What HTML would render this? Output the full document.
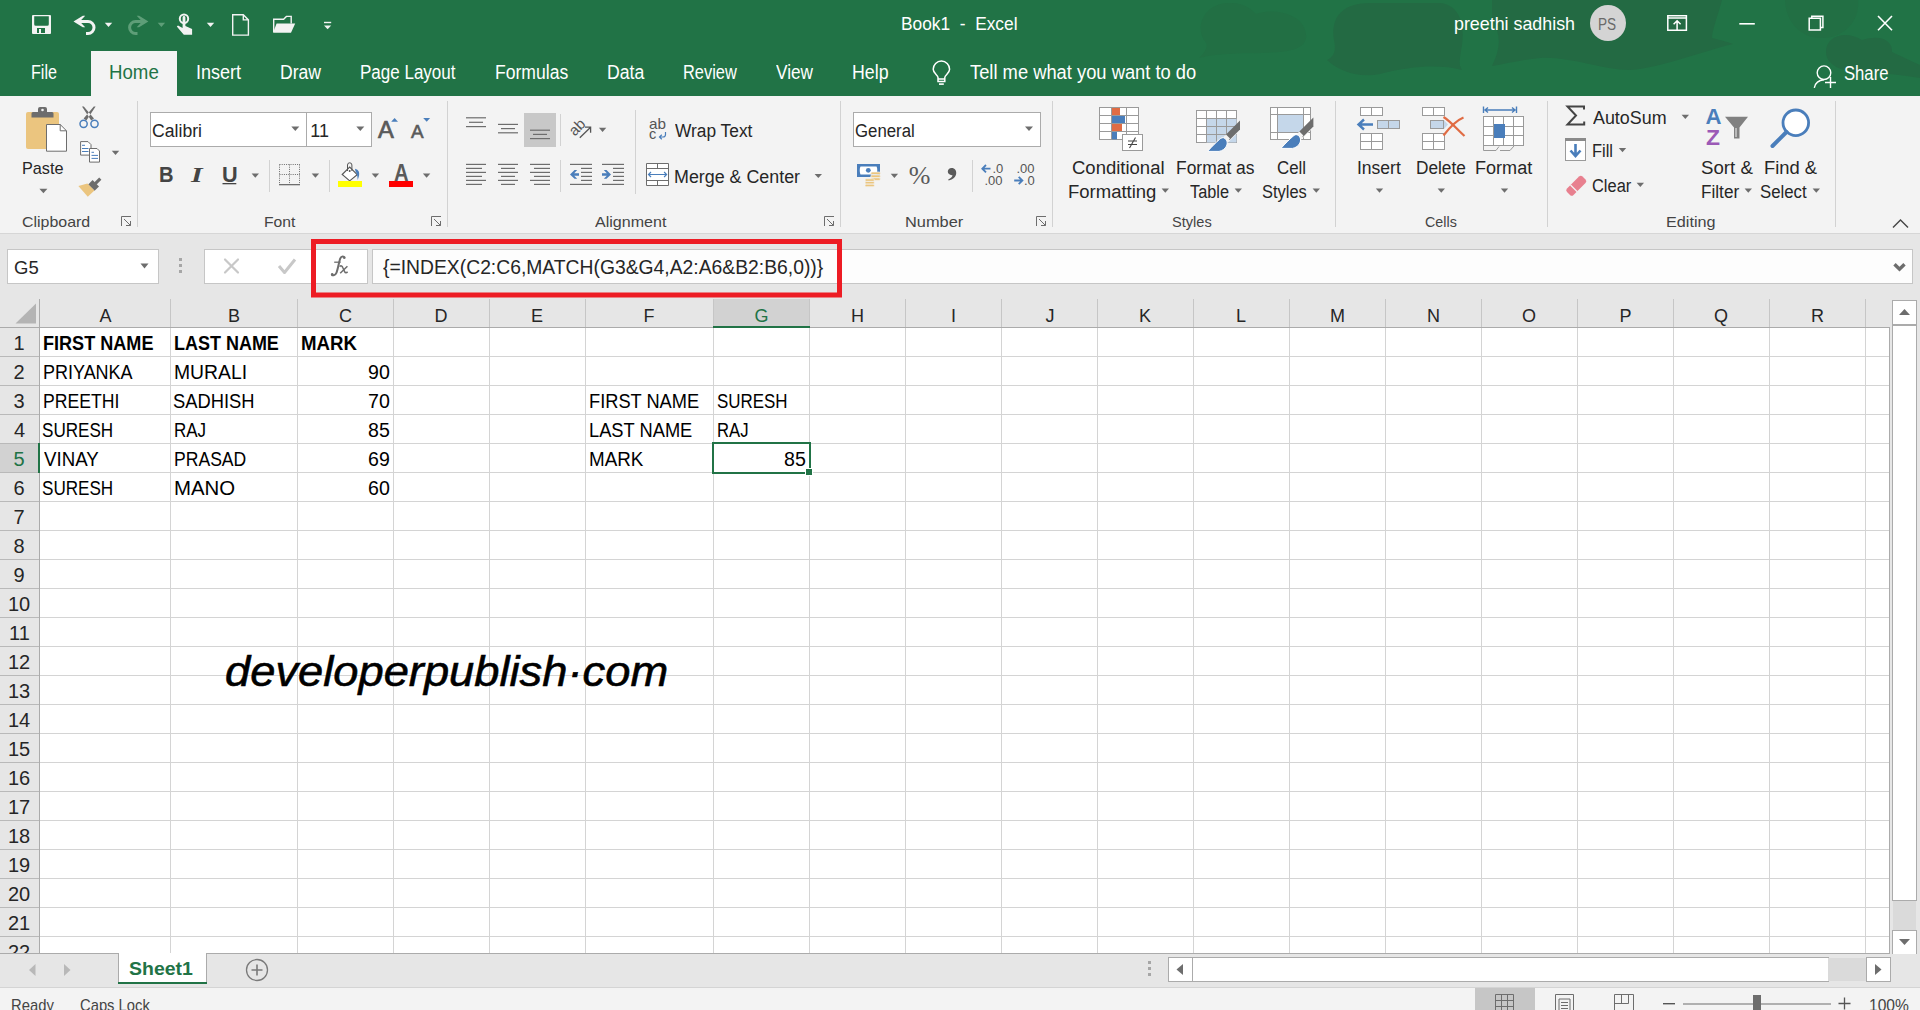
<!DOCTYPE html>
<html><head><meta charset="utf-8"><title>Book1 - Excel</title>
<style>
html,body{margin:0;padding:0;}
body{width:1920px;height:1010px;overflow:hidden;position:relative;background:#f3f3f3;font-family:"Liberation Sans",sans-serif;}
svg{position:absolute;left:0;top:0;}
.tx span{position:absolute;white-space:pre;transform-origin:0 0;}
</style></head><body>
<svg width="1920" height="1010" viewBox="0 0 1920 1010" shape-rendering="auto">
<rect x="0" y="0" width="1920" height="96" fill="#217346" />
<path d="M1199 58 C1205 52 1210 46 1204 40 C1195 25 1205 4 1228 3 C1245 2 1252 10 1256 14 C1270 8 1300 12 1305 30 C1310 45 1298 50 1280 52 C1250 54 1220 52 1199 58Z" fill="#226f44"/>
<path d="M1327 60 C1335 56 1336 50 1334 40 C1330 15 1345 3 1370 3 L1440 3 C1460 5 1465 25 1462 45 C1460 58 1458 64 1462 70 C1440 64 1410 66 1380 74 C1360 78 1340 72 1327 60Z" fill="#236a43"/>
<path d="M1492 0 H1722 C1718 15 1712 30 1712 38 C1720 40 1728 42 1733 44 C1700 52 1660 68 1630 70 C1600 70 1570 56 1540 58 C1520 60 1505 64 1492 66 C1500 50 1502 35 1492 20Z" fill="#236a43"/>
<path d="M1826 52 C1826 36 1845 30 1862 40 C1880 34 1893 40 1892 52 C1905 58 1915 63 1920 65 V78 C1900 75 1880 72 1860 72 C1840 72 1826 64 1826 52Z" fill="#236a43"/>
<path d="M1785 0 H1858 C1860 20 1845 38 1822 38 C1800 38 1786 22 1785 0Z" fill="#226f44"/>
<rect x="91" y="51" width="86" height="45" fill="#f3f3f3" />
<rect x="0" y="96" width="1920" height="137" fill="#f3f3f3" />
<rect x="0" y="233" width="1920" height="1" fill="#d6d6d6"/>
<rect x="0" y="234" width="1920" height="65" fill="#e6e6e6" />
<rect x="0" y="299" width="1920" height="29" fill="#e6e6e6" />
<rect x="0" y="328" width="40" height="625" fill="#e6e6e6" />
<rect x="40" y="328" width="1850" height="625" fill="#ffffff" />
<rect x="7.5" y="249.5" width="151" height="34" fill="#ffffff" stroke="#c6c6c6" stroke-width="1"/>
<path d="M140.5 263.5H148.5L144.5 268.5Z" fill="#6d6d6d"/>
<rect x="179" y="258" width="3" height="3" fill="#a6a6a6" />
<rect x="179" y="264" width="3" height="3" fill="#a6a6a6" />
<rect x="179" y="270" width="3" height="3" fill="#a6a6a6" />
<rect x="204.5" y="249.5" width="163" height="34" fill="#ffffff" stroke="#c6c6c6" stroke-width="1"/>
<rect x="372.5" y="249.5" width="1540" height="34" fill="#fdfdfd" stroke="#c6c6c6" stroke-width="1"/>
<path d="M225 259.5 L238 272.5 M238 259.5 L225 272.5" stroke="#c8c8c8" stroke-width="2.2" stroke-linecap="round"/>
<path d="M279 266 L284.5 272.5 L295 259.5" stroke="#c8c8c8" stroke-width="3" fill="none" stroke-linejoin="round"/>
<path d="M1894.5 264.2 L1899.5 269.2 L1904.5 264.2" stroke="#6d6d6d" stroke-width="3.4" fill="none"/>
<rect x="714" y="299" width="95" height="28" fill="#d2d2d2" />
<rect x="170" y="299" width="1" height="28" fill="#c6c6c6"/>
<rect x="170" y="328" width="1" height="625" fill="#d4d4d4"/>
<rect x="297" y="299" width="1" height="28" fill="#c6c6c6"/>
<rect x="297" y="328" width="1" height="625" fill="#d4d4d4"/>
<rect x="393" y="299" width="1" height="28" fill="#c6c6c6"/>
<rect x="393" y="328" width="1" height="625" fill="#d4d4d4"/>
<rect x="489" y="299" width="1" height="28" fill="#c6c6c6"/>
<rect x="489" y="328" width="1" height="625" fill="#d4d4d4"/>
<rect x="585" y="299" width="1" height="28" fill="#c6c6c6"/>
<rect x="585" y="328" width="1" height="625" fill="#d4d4d4"/>
<rect x="713" y="299" width="1" height="28" fill="#c6c6c6"/>
<rect x="713" y="328" width="1" height="625" fill="#d4d4d4"/>
<rect x="809" y="299" width="1" height="28" fill="#c6c6c6"/>
<rect x="809" y="328" width="1" height="625" fill="#d4d4d4"/>
<rect x="905" y="299" width="1" height="28" fill="#c6c6c6"/>
<rect x="905" y="328" width="1" height="625" fill="#d4d4d4"/>
<rect x="1001" y="299" width="1" height="28" fill="#c6c6c6"/>
<rect x="1001" y="328" width="1" height="625" fill="#d4d4d4"/>
<rect x="1097" y="299" width="1" height="28" fill="#c6c6c6"/>
<rect x="1097" y="328" width="1" height="625" fill="#d4d4d4"/>
<rect x="1193" y="299" width="1" height="28" fill="#c6c6c6"/>
<rect x="1193" y="328" width="1" height="625" fill="#d4d4d4"/>
<rect x="1289" y="299" width="1" height="28" fill="#c6c6c6"/>
<rect x="1289" y="328" width="1" height="625" fill="#d4d4d4"/>
<rect x="1385" y="299" width="1" height="28" fill="#c6c6c6"/>
<rect x="1385" y="328" width="1" height="625" fill="#d4d4d4"/>
<rect x="1481" y="299" width="1" height="28" fill="#c6c6c6"/>
<rect x="1481" y="328" width="1" height="625" fill="#d4d4d4"/>
<rect x="1577" y="299" width="1" height="28" fill="#c6c6c6"/>
<rect x="1577" y="328" width="1" height="625" fill="#d4d4d4"/>
<rect x="1673" y="299" width="1" height="28" fill="#c6c6c6"/>
<rect x="1673" y="328" width="1" height="625" fill="#d4d4d4"/>
<rect x="1769" y="299" width="1" height="28" fill="#c6c6c6"/>
<rect x="1769" y="328" width="1" height="625" fill="#d4d4d4"/>
<rect x="1865" y="299" width="1" height="28" fill="#c6c6c6"/>
<rect x="1865" y="328" width="1" height="625" fill="#d4d4d4"/>
<rect x="0" y="327" width="1890" height="1" fill="#ababab"/>
<rect x="713" y="326" width="97" height="2" fill="#217346" />
<path d="M15.5 323.5 L36 303.5 L36 323.5 Z" fill="#b4b4b4"/>
<rect x="39" y="299" width="1" height="654" fill="#ababab"/>
<rect x="0" y="356" width="39" height="1" fill="#b9b9b9"/>
<rect x="40" y="356" width="1849" height="1" fill="#d4d4d4"/>
<rect x="0" y="385" width="39" height="1" fill="#b9b9b9"/>
<rect x="40" y="385" width="1849" height="1" fill="#d4d4d4"/>
<rect x="0" y="414" width="39" height="1" fill="#b9b9b9"/>
<rect x="40" y="414" width="1849" height="1" fill="#d4d4d4"/>
<rect x="0" y="443" width="39" height="1" fill="#b9b9b9"/>
<rect x="40" y="443" width="1849" height="1" fill="#d4d4d4"/>
<rect x="0" y="472" width="39" height="1" fill="#b9b9b9"/>
<rect x="40" y="472" width="1849" height="1" fill="#d4d4d4"/>
<rect x="0" y="501" width="39" height="1" fill="#b9b9b9"/>
<rect x="40" y="501" width="1849" height="1" fill="#d4d4d4"/>
<rect x="0" y="530" width="39" height="1" fill="#b9b9b9"/>
<rect x="40" y="530" width="1849" height="1" fill="#d4d4d4"/>
<rect x="0" y="559" width="39" height="1" fill="#b9b9b9"/>
<rect x="40" y="559" width="1849" height="1" fill="#d4d4d4"/>
<rect x="0" y="588" width="39" height="1" fill="#b9b9b9"/>
<rect x="40" y="588" width="1849" height="1" fill="#d4d4d4"/>
<rect x="0" y="617" width="39" height="1" fill="#b9b9b9"/>
<rect x="40" y="617" width="1849" height="1" fill="#d4d4d4"/>
<rect x="0" y="646" width="39" height="1" fill="#b9b9b9"/>
<rect x="40" y="646" width="1849" height="1" fill="#d4d4d4"/>
<rect x="0" y="675" width="39" height="1" fill="#b9b9b9"/>
<rect x="40" y="675" width="1849" height="1" fill="#d4d4d4"/>
<rect x="0" y="704" width="39" height="1" fill="#b9b9b9"/>
<rect x="40" y="704" width="1849" height="1" fill="#d4d4d4"/>
<rect x="0" y="733" width="39" height="1" fill="#b9b9b9"/>
<rect x="40" y="733" width="1849" height="1" fill="#d4d4d4"/>
<rect x="0" y="762" width="39" height="1" fill="#b9b9b9"/>
<rect x="40" y="762" width="1849" height="1" fill="#d4d4d4"/>
<rect x="0" y="791" width="39" height="1" fill="#b9b9b9"/>
<rect x="40" y="791" width="1849" height="1" fill="#d4d4d4"/>
<rect x="0" y="820" width="39" height="1" fill="#b9b9b9"/>
<rect x="40" y="820" width="1849" height="1" fill="#d4d4d4"/>
<rect x="0" y="849" width="39" height="1" fill="#b9b9b9"/>
<rect x="40" y="849" width="1849" height="1" fill="#d4d4d4"/>
<rect x="0" y="878" width="39" height="1" fill="#b9b9b9"/>
<rect x="40" y="878" width="1849" height="1" fill="#d4d4d4"/>
<rect x="0" y="907" width="39" height="1" fill="#b9b9b9"/>
<rect x="40" y="907" width="1849" height="1" fill="#d4d4d4"/>
<rect x="0" y="936" width="39" height="1" fill="#b9b9b9"/>
<rect x="40" y="936" width="1849" height="1" fill="#d4d4d4"/>
<rect x="0" y="444" width="39" height="28" fill="#d2d2d2" />
<rect x="38" y="443" width="2" height="30" fill="#217346" />
<rect x="1889" y="327" width="1" height="627" fill="#ababab"/>
<rect x="0" y="953" width="1890" height="1" fill="#ababab"/>
<rect x="1890" y="299" width="30" height="655" fill="#e6e6e6" />
<rect x="1892.5" y="300.5" width="24" height="24" fill="#ffffff" stroke="#ababab" stroke-width="1"/>
<path d="M1899.0 315.0H1910.0L1904.5 309.0Z" fill="#6d6d6d"/>
<rect x="1892.5" y="325.5" width="24" height="575" fill="#ffffff" stroke="#ababab" stroke-width="1"/>
<rect x="1893" y="901" width="23" height="29" fill="#dadada" />
<rect x="1892.5" y="930.5" width="24" height="24" fill="#ffffff" stroke="#ababab" stroke-width="1"/>
<path d="M1899.0 939.0H1910.0L1904.5 945.0Z" fill="#6d6d6d"/>
<rect x="0" y="954" width="1920" height="33" fill="#e6e6e6" />
<rect x="0" y="987" width="1920" height="1" fill="#d4d4d4"/>
<path d="M35.5 964 L29 970 L35.5 976 Z" fill="#b8b8b8"/>
<path d="M64 964 L70.5 970 L64 976 Z" fill="#b8b8b8"/>
<rect x="118" y="953" width="89" height="30" fill="#ffffff" />
<rect x="118" y="953" width="1" height="30" fill="#ababab"/>
<rect x="206" y="953" width="1" height="30" fill="#ababab"/>
<rect x="118" y="982" width="89" height="2" fill="#217346" />
<circle cx="257" cy="970" r="10.5" fill="none" stroke="#7a7a7a" stroke-width="1.3"/>
<path d="M251.5 970 H262.5 M257 964.5 V975.5" stroke="#7a7a7a" stroke-width="1.6"/>
<rect x="1148" y="961" width="3" height="3" fill="#a6a6a6" />
<rect x="1148" y="967" width="3" height="3" fill="#a6a6a6" />
<rect x="1148" y="973" width="3" height="3" fill="#a6a6a6" />
<rect x="1168.5" y="957.5" width="24" height="24" fill="#ffffff" stroke="#ababab" stroke-width="1"/>
<path d="M1176.5 969.5 L1183 964 L1183 975 Z" fill="#6d6d6d"/>
<rect x="1192.5" y="957.5" width="636" height="24" fill="#ffffff" stroke="#ababab" stroke-width="1"/>
<rect x="1828" y="958" width="38" height="23" fill="#dadada" />
<rect x="1866.5" y="957.5" width="24" height="24" fill="#ffffff" stroke="#ababab" stroke-width="1"/>
<path d="M1875 964 L1881.5 969.5 L1875 975 Z" fill="#6d6d6d"/>
<rect x="0" y="988" width="1920" height="22" fill="#f3f3f3" />
<rect x="1475" y="988" width="60" height="22" fill="#c6c6c6" />
<path d="M1495.5 994.5 H1513.5 V1010 M1495.5 994.5 V1010 M1495.5 1000.5 H1513.5 M1495.5 1006.5 H1513.5 M1501.5 994.5 V1010 M1507.5 994.5 V1010" stroke="#6d6d6d" stroke-width="1" fill="none"/>
<path d="M1555.5 994.5 H1573.5 V1010 M1555.5 994.5 V1010 M1559 999 H1570 V1010 M1559 999 V1010 M1561 1002.5 H1568 M1561 1005.5 H1568 M1561 1008.5 H1568" stroke="#6d6d6d" stroke-width="1" fill="none"/>
<path d="M1614.5 994.5 H1633.5 V1010 M1614.5 994.5 V1010 M1614.5 1003.5 H1628.5 V994.5 M1621.5 994.5 V1003.5" stroke="#6d6d6d" stroke-width="1" fill="none"/>
<rect x="1663" y="1003" width="12" height="1.4" fill="#555555"/>
<rect x="1683" y="1003" width="148" height="2" fill="#b0b0b0"/>
<rect x="1753" y="995" width="8" height="15" fill="#6d6d6d" />
<path d="M1838.5 1003.5 H1850.5 M1844.5 997.5 V1009.5" stroke="#555" stroke-width="1.3"/>
<path d="M32 16a1 1 0 0 1 1-1H50a1 1 0 0 1 1 1V33a1 1 0 0 1-1 1H33a1 1 0 0 1-1-1Z" fill="#f3f3f3"/>
<path d="M34.2 16.2H48.8V24.2a1.5 1.5 0 0 1-1.5 1.5H35.7a1.5 1.5 0 0 1-1.5-1.5Z" fill="#217346"/>
<rect x="37" y="28" width="8" height="5" fill="#217346"/><rect x="39" y="29" width="2" height="4" fill="#f3f3f3"/>
<path d="M79 21.5H88A6 6 0 0 1 88 33.5H86" stroke="#f3f3f3" stroke-width="3" fill="none"/>
<path d="M73.5 21.5L82.8 15.8H85.2L79.8 21.5L85.2 27.2H82.8Z" fill="#f3f3f3"/>
<path d="M104.8 22.799999999999997H112.2L108.5 27.0Z" fill="#f3f3f3"/>
<path d="M143 21.5H135.6A6 6 0 0 0 135.6 33.5H137.5" stroke="#5e9e78" stroke-width="3" fill="none"/>
<path d="M148.4 21.5L139.1 15.8H136.7L142.1 21.5L136.7 27.2H139.1Z" fill="#5e9e78"/>
<path d="M157.70000000000002 22.799999999999997H165.1L161.4 27.0Z" fill="#5e9e78"/>
<circle cx="184" cy="18.8" r="4.2" fill="none" stroke="#f3f3f3" stroke-width="2"/>
<path d="M182.6 17.5a1.4 1.4 0 0 1 2.8 0V26L192.1 29V34.8H183.8L176.8 26.5L178 25.6L182.6 28Z" fill="#f3f3f3"/>
<path d="M206.8 22.799999999999997H214.2L210.5 27.0Z" fill="#f3f3f3"/>
<path d="M232.7 14.8H243.3L248.4 19.9V35.1H232.7Z M243.3 14.8V19.9H248.4" stroke="#f3f3f3" stroke-width="1.4" fill="none"/>
<path d="M273.7 32V19.2H283.6L286.4 16.4H291.2V23.5" stroke="#f3f3f3" stroke-width="1.4" fill="none"/>
<path d="M273 32.8L276.6 23.6H295.2L291 32.8Z" fill="#f3f3f3"/>
<rect x="324" y="21.8" width="7.2" height="1.4" fill="#f3f3f3"/>
<path d="M324.0 25.599999999999998H331.20000000000005L327.6 29.2Z" fill="#f3f3f3"/>
<path d="M1667.8 15.8H1686.4V30.3H1667.8Z M1667.8 18H1686.4" stroke="#fff" stroke-width="1.5" fill="none"/>
<path d="M1677.1 30.3V20.8 M1673.6 24.3L1677.1 20.8L1680.6 24.3" stroke="#fff" stroke-width="1.5" fill="none"/>
<rect x="1739.3" y="23" width="15.5" height="1.6" fill="#fff"/>
<path d="M1809.2 18.2H1820.4V29.9H1809.2Z M1811.8 18.2V16.3H1822.9V27.4H1820.4" stroke="#fff" stroke-width="1.5" fill="none"/>
<path d="M1878 16L1892 30.2M1892 16L1878 30.2" stroke="#fff" stroke-width="1.6"/>
<path d="M938 81.5V77.5C938 75 933.2 73.5 933.2 69.3A8.2 8.2 0 0 1 949.6 69.3C949.6 73.5 944.8 75 944.8 77.5V81.5Z M938 79H944.8" stroke="#fff" stroke-width="1.5" fill="none"/>
<rect x="939" y="83.3" width="4.8" height="1.6" fill="#fff"/>
<circle cx="1824" cy="72.7" r="6.8" fill="none" stroke="#fff" stroke-width="1.4"/>
<path d="M1814.3 87.8C1815.3 83 1818.6 80.2 1824 79.8" stroke="#fff" stroke-width="1.4" fill="none"/>
<path d="M1825 82.5H1836M1830.5 77V88" stroke="#fff" stroke-width="1.4"/>
<rect x="137" y="101" width="1" height="126" fill="#d2d2d2"/>
<rect x="447" y="101" width="1" height="126" fill="#d2d2d2"/>
<rect x="840" y="101" width="1" height="126" fill="#d2d2d2"/>
<rect x="1052" y="101" width="1" height="126" fill="#d2d2d2"/>
<rect x="1335" y="101" width="1" height="126" fill="#d2d2d2"/>
<rect x="1547" y="101" width="1" height="126" fill="#d2d2d2"/>
<rect x="1835" y="101" width="1" height="126" fill="#d2d2d2"/>
<rect x="269" y="160" width="1" height="32" fill="#d2d2d2"/>
<rect x="329" y="160" width="1" height="32" fill="#d2d2d2"/>
<rect x="560" y="114" width="1" height="32" fill="#d2d2d2"/>
<rect x="560" y="160" width="1" height="32" fill="#d2d2d2"/>
<rect x="635" y="110" width="1" height="84" fill="#d2d2d2"/>
<rect x="972" y="160" width="1" height="32" fill="#d2d2d2"/>
<path d="M121.5 226V216.5H131 M124 219L130.5 225.5 M130.5 221V225.5H126" stroke="#6d6d6d" stroke-width="1" fill="none"/>
<path d="M431.5 226V216.5H441 M434 219L440.5 225.5 M440.5 221V225.5H436" stroke="#6d6d6d" stroke-width="1" fill="none"/>
<path d="M824.5 226V216.5H834 M827 219L833.5 225.5 M833.5 221V225.5H829" stroke="#6d6d6d" stroke-width="1" fill="none"/>
<path d="M1036.5 226V216.5H1046 M1039 219L1045.5 225.5 M1045.5 221V225.5H1041" stroke="#6d6d6d" stroke-width="1" fill="none"/>
<path d="M1893 227.5L1900.5 220L1908 227.5" stroke="#444" stroke-width="1.4" fill="none"/>
<rect x="26" y="112" width="33" height="37" rx="2" fill="#ebc57f"/>
<path d="M38 109a2 2 0 0 1 2-2h5a2 2 0 0 1 2 2V112H52a1.5 1.5 0 0 1 1.5 1.5V117.5H31.5V113.5A1.5 1.5 0 0 1 33 112H38Z" fill="#6d6d6d"/>
<circle cx="42.5" cy="110" r="1.3" fill="#f3f3f3"/>
<path d="M46.5 124.5H60.2L66.5 130.8V151.2H46.5Z" fill="#fff" stroke="#6d6d6d" stroke-width="1"/>
<path d="M60.2 124.5V130.8H66.5" fill="none" stroke="#6d6d6d" stroke-width="1"/>
<path d="M39.4 188.75H47.4L43.4 193.25Z" fill="#6d6d6d"/>
<path d="M82 106.4H83.8L94 118.4L91.2 120.6Z M95.6 106.4H93.8L83.6 118.4L86.4 120.6Z" fill="#6d6d6d"/>
<circle cx="83.6" cy="123.8" r="3.6" fill="none" stroke="#4a7ebb" stroke-width="1.5"/><circle cx="94.5" cy="123.8" r="3.6" fill="none" stroke="#4a7ebb" stroke-width="1.5"/>
<path d="M80.6 141.6H88L91 144.6V155.1H80.6Z" fill="#fff" stroke="#6d6d6d" stroke-width="1"/>
<path d="M89.5 148.5H97L99.5 151V162.1H89.5Z" fill="#fff" stroke="#6d6d6d" stroke-width="1"/>
<path d="M82 145.3H85M82 148.5H88.5M82 151.5H88.5M91.5 152.3H94M91.5 155.4H98M91.5 158.4H98" stroke="#4a7ebb" stroke-width="1"/>
<path d="M111.8 150.70000000000002H119.2L115.5 154.9Z" fill="#6d6d6d"/>
<path d="M99.2 177.6L101.4 179.8L96.4 184.8L94.2 182.6Z" fill="#6d6d6d"/>
<path d="M92.6 180L99 186.4L94.6 190.8L88.2 184.4Z" fill="#6d6d6d"/>
<path d="M78.4 186.1L87.4 183.6L94.4 190.6L87.8 196.8Z" fill="#ebc57f"/>
<rect x="150.5" y="112.5" width="156" height="34" fill="#fff" stroke="#ababab" stroke-width="1"/>
<rect x="306.5" y="112.5" width="65" height="34" fill="#fff" stroke="#ababab" stroke-width="1"/>
<path d="M291.3 126.55000000000001H299.3L295.3 131.05Z" fill="#6d6d6d"/>
<path d="M356.3 126.55000000000001H364.3L360.3 131.05Z" fill="#6d6d6d"/>
<path d="M391.2 121.8H398L394.6 118Z" fill="#4a7ebb"/>
<path d="M423.2 118H430.1L426.7 121.8Z" fill="#4a7ebb"/>
<path d="M279.5 164.5H300M279.5 174.5H300M279.5 164.5V184M289.5 164.5V184M299.5 164.5V184" stroke="#6d6d6d" stroke-width="1" stroke-dasharray="1 1.2" fill="none"/>
<rect x="279" y="184" width="21" height="1.3" fill="#6d6d6d"/>
<path d="M251.60000000000002 173.5H259.0L255.3 177.7Z" fill="#6d6d6d"/>
<path d="M311.7 173.5H319.09999999999997L315.4 177.7Z" fill="#6d6d6d"/>
<path d="M371.7 173.5H379.09999999999997L375.4 177.7Z" fill="#6d6d6d"/>
<path d="M422.90000000000003 173.5H430.3L426.6 177.7Z" fill="#6d6d6d"/>
<rect x="222.5" y="183" width="13.8" height="1.3" fill="#444"/>
<path d="M342.2 174.5L349.7 167.1L357.2 174.6L349.7 180.9Z" fill="#fff" stroke="#555" stroke-width="1.1"/>
<path d="M347.5 171V165a2.2 2.2 0 0 1 4.4 0V171" fill="none" stroke="#555" stroke-width="1"/><circle cx="349.7" cy="171" r="1" fill="#555"/>
<path d="M355 168.8C358.5 169.5 361 172.5 357.7 180C357.5 176 357 173 355.5 171.5Z" fill="#4a7ebb"/>
<rect x="338" y="181" width="24" height="6" fill="#ffff00"/>
<rect x="389" y="181" width="24" height="6" fill="#ff0000"/>
<rect x="524" y="113" width="32" height="34" fill="#c8c8c8" />
<rect x="466.0" y="117.2" width="20" height="1.2" fill="#6d6d6d"/>
<rect x="469.0" y="121.7" width="14" height="1.2" fill="#6d6d6d"/>
<rect x="466.0" y="126" width="20" height="1.2" fill="#6d6d6d"/>
<rect x="498.0" y="123.8" width="20" height="1.2" fill="#6d6d6d"/>
<rect x="501.0" y="128" width="14" height="1.2" fill="#6d6d6d"/>
<rect x="498.0" y="132.2" width="20" height="1.2" fill="#6d6d6d"/>
<rect x="530.0" y="129.6" width="20" height="1.2" fill="#6d6d6d"/>
<rect x="533.0" y="133.8" width="14" height="1.2" fill="#6d6d6d"/>
<rect x="530.0" y="138" width="20" height="1.2" fill="#6d6d6d"/>
<rect x="466" y="163.8" width="20" height="1.2" fill="#6d6d6d"/>
<rect x="466" y="167.8" width="16" height="1.2" fill="#6d6d6d"/>
<rect x="466" y="171.8" width="20" height="1.2" fill="#6d6d6d"/>
<rect x="466" y="175.8" width="16" height="1.2" fill="#6d6d6d"/>
<rect x="466" y="179.8" width="20" height="1.2" fill="#6d6d6d"/>
<rect x="466" y="183.8" width="16" height="1.2" fill="#6d6d6d"/>
<rect x="498.0" y="163.8" width="20" height="1.2" fill="#6d6d6d"/>
<rect x="501.0" y="167.8" width="14" height="1.2" fill="#6d6d6d"/>
<rect x="498.0" y="171.8" width="20" height="1.2" fill="#6d6d6d"/>
<rect x="501.0" y="175.8" width="14" height="1.2" fill="#6d6d6d"/>
<rect x="498.0" y="179.8" width="20" height="1.2" fill="#6d6d6d"/>
<rect x="501.0" y="183.8" width="14" height="1.2" fill="#6d6d6d"/>
<rect x="530" y="163.8" width="20" height="1.2" fill="#6d6d6d"/>
<rect x="534" y="167.8" width="16" height="1.2" fill="#6d6d6d"/>
<rect x="530" y="171.8" width="20" height="1.2" fill="#6d6d6d"/>
<rect x="534" y="175.8" width="16" height="1.2" fill="#6d6d6d"/>
<rect x="530" y="179.8" width="20" height="1.2" fill="#6d6d6d"/>
<rect x="534" y="183.8" width="16" height="1.2" fill="#6d6d6d"/>
<rect x="570" y="163.8" width="22" height="1.2" fill="#6d6d6d"/>
<rect x="570" y="183.8" width="22" height="1.2" fill="#6d6d6d"/>
<rect x="581" y="167.8" width="11" height="1.2" fill="#6d6d6d"/>
<rect x="581" y="171.8" width="11" height="1.2" fill="#6d6d6d"/>
<rect x="581" y="175.8" width="11" height="1.2" fill="#6d6d6d"/>
<rect x="581" y="179.8" width="11" height="1.2" fill="#6d6d6d"/>
<rect x="602" y="163.8" width="22" height="1.2" fill="#6d6d6d"/>
<rect x="602" y="183.8" width="22" height="1.2" fill="#6d6d6d"/>
<rect x="613" y="167.8" width="11" height="1.2" fill="#6d6d6d"/>
<rect x="613" y="171.8" width="11" height="1.2" fill="#6d6d6d"/>
<rect x="613" y="175.8" width="11" height="1.2" fill="#6d6d6d"/>
<rect x="613" y="179.8" width="11" height="1.2" fill="#6d6d6d"/>
<path d="M570 174.4L574.5 170H577.2L574.2 173.2H579V175.8H574.2L577.2 178.8H574.5Z" fill="#4a7ebb"/>
<path d="M611 174.4L606.5 170H603.8L606.8 173.2H602V175.8H606.8L603.8 178.8H606.5Z" fill="#4a7ebb"/>
<g transform="translate(577.5 127.5) rotate(-45)"><text x="-8.5" y="4.5" font-family="Liberation Sans" font-size="15" fill="#555">ab</text></g>
<path d="M579.8 137.8L590.6 127.2M585 127.2H590.6V132.8" stroke="#555" stroke-width="1.3" fill="none"/>
<path d="M598.9 127.70000000000002H606.3000000000001L602.6 131.9Z" fill="#6d6d6d"/>
<text x="649" y="128.6" font-family="Liberation Sans" font-size="14.5" fill="#555" textLength="17" lengthAdjust="spacingAndGlyphs">ab</text>
<text x="649" y="138.8" font-family="Liberation Sans" font-size="14.5" fill="#555">c</text>
<path d="M665.5 132V134.5A2.5 2.5 0 0 1 663 137H659.5M661.8 134.8L659.5 137L661.8 139.2" stroke="#4a7ebb" stroke-width="1.2" fill="none"/>
<path d="M646.5 163.5H668.5V185.5H646.5Z M646.5 168.5H668.5 M646.5 180.5H668.5 M657.5 163.5V168.5 M657.5 180.5V185.5" stroke="#6d6d6d" stroke-width="1" fill="#fff"/>
<path d="M648.5 174.5H666.6 M651 172L648.5 174.5L651 177 M664.1 172L666.6 174.5L664.1 177" stroke="#4a7ebb" stroke-width="1.2" fill="none"/>
<path d="M814.5999999999999 173.9H822.0L818.3 178.1Z" fill="#6d6d6d"/>
<rect x="853.5" y="112.5" width="187" height="34" fill="#fff" stroke="#ababab" stroke-width="1"/>
<path d="M1025.0 126.55000000000001H1033.0L1029 131.05Z" fill="#6d6d6d"/>
<rect x="857" y="164" width="23" height="13" fill="#4a7ebb"/>
<path d="M860.5 166.5H876.5C877.5 168 877.5 172.5 876.5 174.5H860.5C859.5 172.5 859.5 168 860.5 166.5Z" fill="#fff"/>
<circle cx="868.3" cy="170.3" r="2.4" fill="#4a7ebb"/>
<rect x="870.8" y="172" width="9.6" height="2.6" rx="1.3" fill="#ebc57f" stroke="#f3f3f3" stroke-width="0.7"/>
<rect x="870.8" y="174.9" width="9.6" height="2.6" rx="1.3" fill="#ebc57f" stroke="#f3f3f3" stroke-width="0.7"/>
<rect x="870.8" y="177.8" width="9.6" height="2.6" rx="1.3" fill="#ebc57f" stroke="#f3f3f3" stroke-width="0.7"/>
<rect x="865" y="178.8" width="9.4" height="2.5" rx="1.25" fill="#ebc57f" stroke="#f3f3f3" stroke-width="0.7"/>
<rect x="865" y="181.5" width="9.4" height="2.5" rx="1.25" fill="#ebc57f" stroke="#f3f3f3" stroke-width="0.7"/>
<rect x="865" y="184.2" width="9.4" height="2.5" rx="1.25" fill="#ebc57f" stroke="#f3f3f3" stroke-width="0.7"/>
<path d="M890.6999999999999 173.70000000000002H898.1L894.4 177.9Z" fill="#6d6d6d"/>
<text x="908.8" y="184" font-family="Liberation Serif" font-size="26" fill="#5a5a5a">%</text>
<path d="M951.5 168C955 168 956.5 170.5 956.2 173.5C955.8 177 953 179.5 948.6 180.5L948.2 179.4C951 178.3 952.2 176.8 952.5 175.2C949.8 175.5 947.8 173.8 947.8 171.6C947.8 169.5 949.5 168 951.5 168Z" fill="#5a5a5a"/>
<path d="M982.5 168.7H990.5M986 165L982.3 168.7L986 172.4" stroke="#4a7ebb" stroke-width="1.8" fill="none"/>
<text x="992.5" y="173.1" font-family="Liberation Sans" font-size="13" fill="#555">.0</text>
<text x="984.5" y="185" font-family="Liberation Sans" font-size="13" fill="#555">.00</text>
<text x="1016.5" y="173.1" font-family="Liberation Sans" font-size="13" fill="#555">.00</text>
<path d="M1014.2 180.5H1022.2M1018.7 176.8L1022.4 180.5L1018.7 184.2" stroke="#4a7ebb" stroke-width="1.8" fill="none"/>
<text x="1024" y="185" font-family="Liberation Sans" font-size="13" fill="#555">.0</text>
<rect x="1099.5" y="107.5" width="39" height="32" fill="#fff" stroke="#9a9a9a" stroke-width="1"/>
<rect x="1112" y="108" width="8" height="7.3" fill="#e06c44"/><rect x="1112" y="116" width="13" height="7.3" fill="#4a7ebb"/><rect x="1112" y="124" width="10" height="7.3" fill="#e06c44"/><rect x="1112" y="132" width="5" height="7.3" fill="#4a7ebb"/>
<path d="M1099.5 115.5H1138.5M1099.5 123.5H1138.5M1099.5 131.5H1138.5M1111.5 107.5V139.5M1126.5 107.5V139.5" stroke="#9a9a9a" stroke-width="1" fill="none"/>
<rect x="1122.5" y="134.5" width="20" height="16" fill="#fff" stroke="#9a9a9a" stroke-width="1"/>
<path d="M1128 141H1137M1128 144.5H1137M1129.5 148L1135.5 137.5" stroke="#444" stroke-width="1.1"/>
<rect x="1196.5" y="110.5" width="40" height="32" fill="#fff" stroke="#9a9a9a" stroke-width="1"/>
<rect x="1206.5" y="118.5" width="30" height="24" fill="#c5d7ea"/>
<path d="M1196.5 118.5H1236.5M1196.5 126.5H1236.5M1196.5 134.5H1236.5M1206.5 110.5V142.5M1216.5 110.5V142.5M1226.5 110.5V142.5" stroke="#9a9a9a" stroke-width="1" fill="none"/>
<path d="M1240 120.4V130.4L1228 142.4L1224 138.4L1236 126.4Z" fill="#f3f3f3"/>
<path d="M1240 120.4L1240 129.4L1229.5 139.9L1225 135.4Z" fill="#6d6d6d"/>
<path d="M1230 138.4L1227.5 140.9L1223.5 136.9L1226 134.4Z" fill="#f3f3f3"/>
<path d="M1225 138.4C1230 142.4 1226 150.4 1219 151.4 H1207.5 C1212 146.4 1216 142.4 1219.5 139.4C1221 137.9 1223 136.9 1225 138.4Z" fill="#4a7ebb" stroke="#fff" stroke-width="1"/>
<rect x="1270.5" y="107.5" width="40" height="32" fill="#fff" stroke="#9a9a9a" stroke-width="1"/>
<rect x="1277.5" y="114.5" width="26" height="18" fill="#c5d7ea"/>
<path d="M1270.5 114.5H1310.5M1270.5 132.5H1310.5M1277.5 107.5V139.5M1303.5 107.5V139.5" stroke="#9a9a9a" stroke-width="1" fill="none"/>
<path d="M1313.4 117.4V127.4L1301.4 139.4L1297.4 135.4L1309.4 123.4Z" fill="#f3f3f3"/>
<path d="M1313.4 117.4L1313.4 126.4L1302.9 136.9L1298.4 132.4Z" fill="#6d6d6d"/>
<path d="M1303.4 135.4L1300.9 137.9L1296.9 133.9L1299.4 131.4Z" fill="#f3f3f3"/>
<path d="M1298.4 135.4C1303.4 139.4 1299.4 147.4 1292.4 148.4 H1280.9 C1285.4 143.4 1289.4 139.4 1292.9 136.4C1294.4 134.9 1296.4 133.9 1298.4 135.4Z" fill="#4a7ebb" stroke="#fff" stroke-width="1"/>
<path d="M1161.6 188.6H1169.0L1165.3 192.79999999999998Z" fill="#6d6d6d"/>
<path d="M1234.6 188.6H1242.0L1238.3 192.79999999999998Z" fill="#6d6d6d"/>
<path d="M1312.6 188.6H1320.0L1316.3 192.79999999999998Z" fill="#6d6d6d"/>
<rect x="1360.5" y="107.5" width="22" height="8" fill="#fff" stroke="#9a9a9a" stroke-width="1"/>
<path d="M1371.5 107V116" stroke="#9a9a9a" stroke-width="1"/>
<rect x="1377.5" y="120.5" width="22" height="8" fill="#c5d7ea" stroke="#9a9a9a" stroke-width="1"/>
<path d="M1388.5 120V129" stroke="#9a9a9a" stroke-width="1"/>
<rect x="1360.5" y="133.5" width="22" height="16" fill="#fff" stroke="#9a9a9a" stroke-width="1"/>
<path d="M1371.5 133V150" stroke="#9a9a9a" stroke-width="1"/>
<path d="M1360 141.5H1383" stroke="#9a9a9a" stroke-width="1"/>
<path d="M1373 124.5H1359M1364 119.5L1358.5 124.5L1364 129.5" stroke="#4a7ebb" stroke-width="2.4" fill="none"/>
<rect x="1422.5" y="107.5" width="22" height="8" fill="#fff" stroke="#9a9a9a" stroke-width="1"/>
<path d="M1433.5 107V116" stroke="#9a9a9a" stroke-width="1"/>
<rect x="1430.5" y="120.5" width="13" height="8" fill="#c5d7ea" stroke="#9a9a9a" stroke-width="1"/>
<path d="M1444 120L1448 124.5L1444 129Z" fill="#c5d7ea"/>
<rect x="1422.5" y="133.5" width="22" height="16" fill="#fff" stroke="#9a9a9a" stroke-width="1"/>
<path d="M1433.5 133V150" stroke="#9a9a9a" stroke-width="1"/>
<path d="M1422 141.5H1445" stroke="#9a9a9a" stroke-width="1"/>
<path d="M1443.5 117C1450 121 1456 128 1464.5 136" stroke="#e06c44" stroke-width="2.2" fill="none"/>
<path d="M1463.5 117.5C1456 120.5 1450 127 1443.5 135.5" stroke="#e06c44" stroke-width="2.2" fill="none"/>
<path d="M1483.5 106.5V113M1516.5 106.5V113M1485 110H1515M1488 107.5L1485 110L1488 112.5M1512 107.5L1515 110L1512 112.5" stroke="#4a7ebb" stroke-width="1.4" fill="none"/>
<rect x="1483.5" y="116.5" width="40" height="29" fill="#fff" stroke="#9a9a9a" stroke-width="1"/>
<path d="M1493.5 116V146" stroke="#9a9a9a" stroke-width="1"/>
<path d="M1503.5 116V146" stroke="#9a9a9a" stroke-width="1"/>
<path d="M1513.5 116V146" stroke="#9a9a9a" stroke-width="1"/>
<path d="M1483 126.5H1524" stroke="#9a9a9a" stroke-width="1"/>
<path d="M1483 135.5H1524" stroke="#9a9a9a" stroke-width="1"/>
<rect x="1494" y="124" width="11" height="14" fill="#4a7ebb"/>
<path d="M1483.5 146V150.5H1496L1499 146.5M1500 150.5H1510L1514 146" stroke="#9a9a9a" stroke-width="1" fill="none"/>
<path d="M1375.8 188.6H1383.2L1379.5 192.79999999999998Z" fill="#6d6d6d"/>
<path d="M1437.6 188.6H1445.0L1441.3 192.79999999999998Z" fill="#6d6d6d"/>
<path d="M1500.8 188.6H1508.2L1504.5 192.79999999999998Z" fill="#6d6d6d"/>
<path d="M1584 109.5V106.5H1567.5L1576 115.5L1567.5 124.5H1584.2V121.5" stroke="#444" stroke-width="2" fill="none" stroke-linejoin="miter"/>
<path d="M1681.6 114.7H1689.0L1685.3 118.89999999999999Z" fill="#6d6d6d"/>
<rect x="1565.5" y="138.5" width="20" height="22" fill="#fff" stroke="#9a9a9a" stroke-width="1"/>
<rect x="1565" y="138" width="21" height="3" fill="#8a8a8a"/>
<path d="M1575.5 144V156M1570.5 150.5L1575.5 156L1580.5 150.5" stroke="#4a7ebb" stroke-width="2.6" fill="none"/>
<path d="M1618.8 148.1H1626.2L1622.5 152.29999999999998Z" fill="#6d6d6d"/>
<path d="M1567 188.5L1579 176.5a2.5 2.5 0 0 1 3.5 0L1585.5 179.5a2.5 2.5 0 0 1 0 3.5L1573.5 195a2.5 2.5 0 0 1-3.5 0L1567 192a2.5 2.5 0 0 1 0-3.5Z" fill="#e8808f"/>
<path d="M1570.5 185L1580 194.5" stroke="#f3f3f3" stroke-width="1.2"/>
<path d="M1636.6 182.70000000000002H1644.0L1640.3 186.9Z" fill="#6d6d6d"/>
<text x="1705.5" y="123.5" font-family="Liberation Sans" font-weight="bold" font-size="22" fill="#4a7ebb" textLength="16" lengthAdjust="spacingAndGlyphs">A</text>
<text x="1706" y="144.7" font-family="Liberation Sans" font-weight="bold" font-size="22" fill="#9b59b6" textLength="14" lengthAdjust="spacingAndGlyphs">Z</text>
<path d="M1725 116.8H1748L1739.5 127.5V138.5H1734V127.5Z" fill="#808080"/>
<path d="M1736 128V137" stroke="#f3f3f3" stroke-width="1"/>
<path d="M1744.6 188.6H1752.0L1748.3 192.79999999999998Z" fill="#6d6d6d"/>
<circle cx="1795.8" cy="122.8" r="12.8" fill="#fff" stroke="#4a7ebb" stroke-width="2.8"/>
<path d="M1786.5 132L1772.5 146" stroke="#4a7ebb" stroke-width="4" stroke-linecap="round"/>
<path d="M1812.6 188.6H1820.0L1816.3 192.79999999999998Z" fill="#6d6d6d"/>
<path d="M344.6 257.6C344 256.2 341.4 255.8 340.3 258.3C339.2 260.8 337.9 269.5 336.4 272.8C335.3 275.3 332.8 276 331.8 274.6" stroke="#6d6d6d" stroke-width="2" fill="none"/>
<circle cx="344.3" cy="257.7" r="1.3" fill="#6d6d6d"/><circle cx="332.2" cy="274.4" r="1.3" fill="#6d6d6d"/>
<path d="M334.2 262.2H340.6" stroke="#6d6d6d" stroke-width="1.3"/>
<path d="M339.6 266.6C340.8 265.4 342.2 265.6 342.9 267.8L344.6 271.6C345.3 273.2 346.6 273 347.6 271.8" stroke="#6d6d6d" stroke-width="1.5" fill="none"/>
<path d="M347.4 266.2L340.2 273.2" stroke="#6d6d6d" stroke-width="1.5"/>
<circle cx="1608" cy="23" r="18" fill="#d4d4d4"/>
</svg>
<div class="tx">
<span style="left:900.69px;top:14px;font-family:'Liberation Sans';font-size:19px;line-height:19px;color:#ffffff;font-weight:normal;font-style:normal;transform:scaleX(0.9119);">Book1  -  Excel</span>
<span style="left:1453.56px;top:14px;font-family:'Liberation Sans';font-size:19px;line-height:19px;color:#ffffff;font-weight:normal;font-style:normal;transform:scaleX(0.9390);">preethi sadhish</span>
<span style="left:1598.15px;top:16.5px;font-family:'Liberation Sans';font-size:16px;line-height:16px;color:#6a6a6a;font-weight:normal;font-style:normal;transform:scaleX(0.8500);">PS</span>
<span style="left:31.19px;top:62px;font-family:'Liberation Sans';font-size:20px;line-height:20px;color:#ffffff;font-weight:normal;font-style:normal;transform:scaleX(0.8065);">File</span>
<span style="left:195.70px;top:62px;font-family:'Liberation Sans';font-size:20px;line-height:20px;color:#ffffff;font-weight:normal;font-style:normal;transform:scaleX(0.9010);">Insert</span>
<span style="left:279.62px;top:62px;font-family:'Liberation Sans';font-size:20px;line-height:20px;color:#ffffff;font-weight:normal;font-style:normal;transform:scaleX(0.8804);">Draw</span>
<span style="left:359.65px;top:62px;font-family:'Liberation Sans';font-size:20px;line-height:20px;color:#ffffff;font-weight:normal;font-style:normal;transform:scaleX(0.8504);">Page Layout</span>
<span style="left:494.62px;top:62px;font-family:'Liberation Sans';font-size:20px;line-height:20px;color:#ffffff;font-weight:normal;font-style:normal;transform:scaleX(0.8780);">Formulas</span>
<span style="left:606.62px;top:62px;font-family:'Liberation Sans';font-size:20px;line-height:20px;color:#ffffff;font-weight:normal;font-style:normal;transform:scaleX(0.8841);">Data</span>
<span style="left:682.93px;top:62px;font-family:'Liberation Sans';font-size:20px;line-height:20px;color:#ffffff;font-weight:normal;font-style:normal;transform:scaleX(0.8192);">Review</span>
<span style="left:776.00px;top:62px;font-family:'Liberation Sans';font-size:20px;line-height:20px;color:#ffffff;font-weight:normal;font-style:normal;transform:scaleX(0.8605);">View</span>
<span style="left:851.61px;top:62px;font-family:'Liberation Sans';font-size:20px;line-height:20px;color:#ffffff;font-weight:normal;font-style:normal;transform:scaleX(0.8875);">Help</span>
<span style="left:970.00px;top:62px;font-family:'Liberation Sans';font-size:20px;line-height:20px;color:#ffffff;font-weight:normal;font-style:normal;transform:scaleX(0.9167);">Tell me what you want to do</span>
<span style="left:108.57px;top:62px;font-family:'Liberation Sans';font-size:20px;line-height:20px;color:#217346;font-weight:normal;font-style:normal;transform:scaleX(0.9327);">Home</span>
<span style="left:1843.87px;top:63px;font-family:'Liberation Sans';font-size:20px;line-height:20px;color:#ffffff;font-weight:normal;font-style:normal;transform:scaleX(0.8327);">Share</span>
<span style="left:22.00px;top:213.8px;font-family:'Liberation Sans';font-size:15px;line-height:15px;color:#444444;font-weight:normal;font-style:normal;transform:scaleX(1.0625);">Clipboard</span>
<span style="left:263.66px;top:213.8px;font-family:'Liberation Sans';font-size:15px;line-height:15px;color:#444444;font-weight:normal;font-style:normal;transform:scaleX(1.0448);">Font</span>
<span style="left:595.30px;top:213.8px;font-family:'Liberation Sans';font-size:15px;line-height:15px;color:#444444;font-weight:normal;font-style:normal;transform:scaleX(1.0701);">Alignment</span>
<span style="left:904.71px;top:213.8px;font-family:'Liberation Sans';font-size:15px;line-height:15px;color:#444444;font-weight:normal;font-style:normal;transform:scaleX(1.0904);">Number</span>
<span style="left:1172.33px;top:213.8px;font-family:'Liberation Sans';font-size:15px;line-height:15px;color:#444444;font-weight:normal;font-style:normal;transform:scaleX(0.9725);">Styles</span>
<span style="left:1424.70px;top:213.8px;font-family:'Liberation Sans';font-size:15px;line-height:15px;color:#444444;font-weight:normal;font-style:normal;transform:scaleX(0.9545);">Cells</span>
<span style="left:1666.42px;top:213.8px;font-family:'Liberation Sans';font-size:15px;line-height:15px;color:#444444;font-weight:normal;font-style:normal;transform:scaleX(1.0795);">Editing</span>
<span style="left:21.95px;top:159.6px;font-family:'Liberation Sans';font-size:17px;line-height:17px;color:#262626;font-weight:normal;font-style:normal;transform:scaleX(0.9548);">Paste</span>
<span style="left:152.02px;top:121.9px;font-family:'Liberation Sans';font-size:18px;line-height:18px;color:#262626;font-weight:normal;font-style:normal;transform:scaleX(0.9796);">Calibri</span>
<span style="left:310.30px;top:121.9px;font-family:'Liberation Sans';font-size:18px;line-height:18px;color:#262626;font-weight:normal;font-style:normal;">11</span>
<span style="left:674.70px;top:121.80000000000001px;font-family:'Liberation Sans';font-size:18px;line-height:18px;color:#262626;font-weight:normal;font-style:normal;transform:scaleX(0.9625);">Wrap Text</span>
<span style="left:674.01px;top:167.7px;font-family:'Liberation Sans';font-size:18px;line-height:18px;color:#262626;font-weight:normal;font-style:normal;transform:scaleX(0.9921);">Merge &amp; Center</span>
<span style="left:855.37px;top:121.5px;font-family:'Liberation Sans';font-size:18px;line-height:18px;color:#262626;font-weight:normal;font-style:normal;transform:scaleX(0.9339);">General</span>
<span style="left:1072.27px;top:158.5px;font-family:'Liberation Sans';font-size:18px;line-height:18px;color:#262626;font-weight:normal;font-style:normal;transform:scaleX(1.0273);">Conditional</span>
<span style="left:1067.67px;top:182.7px;font-family:'Liberation Sans';font-size:18px;line-height:18px;color:#262626;font-weight:normal;font-style:normal;transform:scaleX(1.0274);">Formatting</span>
<span style="left:1175.73px;top:158.5px;font-family:'Liberation Sans';font-size:18px;line-height:18px;color:#262626;font-weight:normal;font-style:normal;transform:scaleX(0.9688);">Format as</span>
<span style="left:1190.00px;top:182.7px;font-family:'Liberation Sans';font-size:18px;line-height:18px;color:#262626;font-weight:normal;font-style:normal;transform:scaleX(0.9070);">Table</span>
<span style="left:1276.56px;top:158.5px;font-family:'Liberation Sans';font-size:18px;line-height:18px;color:#262626;font-weight:normal;font-style:normal;transform:scaleX(0.9379);">Cell</span>
<span style="left:1261.59px;top:182.7px;font-family:'Liberation Sans';font-size:18px;line-height:18px;color:#262626;font-weight:normal;font-style:normal;transform:scaleX(0.9125);">Styles</span>
<span style="left:1357.03px;top:158.5px;font-family:'Liberation Sans';font-size:18px;line-height:18px;color:#262626;font-weight:normal;font-style:normal;transform:scaleX(0.9727);">Insert</span>
<span style="left:1416.04px;top:158.5px;font-family:'Liberation Sans';font-size:18px;line-height:18px;color:#262626;font-weight:normal;font-style:normal;transform:scaleX(0.9569);">Delete</span>
<span style="left:1474.80px;top:158.5px;font-family:'Liberation Sans';font-size:18px;line-height:18px;color:#262626;font-weight:normal;font-style:normal;transform:scaleX(1.0036);">Format</span>
<span style="left:1592.50px;top:108.5px;font-family:'Liberation Sans';font-size:18px;line-height:18px;color:#262626;font-weight:normal;font-style:normal;transform:scaleX(0.9932);">AutoSum</span>
<span style="left:1592.09px;top:142.3px;font-family:'Liberation Sans';font-size:18px;line-height:18px;color:#262626;font-weight:normal;font-style:normal;transform:scaleX(0.9143);">Fill</span>
<span style="left:1591.59px;top:176.5px;font-family:'Liberation Sans';font-size:18px;line-height:18px;color:#262626;font-weight:normal;font-style:normal;transform:scaleX(0.9119);">Clear</span>
<span style="left:1700.66px;top:158.5px;font-family:'Liberation Sans';font-size:18px;line-height:18px;color:#262626;font-weight:normal;font-style:normal;transform:scaleX(1.0367);">Sort &amp;</span>
<span style="left:1701.05px;top:182.7px;font-family:'Liberation Sans';font-size:18px;line-height:18px;color:#262626;font-weight:normal;font-style:normal;transform:scaleX(0.9538);">Filter</span>
<span style="left:1763.68px;top:158.5px;font-family:'Liberation Sans';font-size:18px;line-height:18px;color:#262626;font-weight:normal;font-style:normal;transform:scaleX(1.0196);">Find &amp;</span>
<span style="left:1760.37px;top:182.7px;font-family:'Liberation Sans';font-size:18px;line-height:18px;color:#262626;font-weight:normal;font-style:normal;transform:scaleX(0.9327);">Select</span>
<span style="left:13.78px;top:257.5px;font-family:'Liberation Sans';font-size:19px;line-height:19px;color:#262626;font-weight:normal;font-style:normal;transform:scaleX(0.9729);">G5</span>
<span style="left:383.00px;top:256.8px;font-family:'Liberation Sans';font-size:20px;line-height:20px;color:#262626;font-weight:normal;font-style:normal;transform:scaleX(0.9656);">{=INDEX(C2:C6,MATCH(G3&amp;G4,A2:A6&amp;B2:B6,0))}</span>
<span style="left:99.50px;top:307px;font-family:'Liberation Sans';font-size:18px;line-height:18px;color:#262626;font-weight:normal;font-style:normal;">A</span>
<span style="left:228.00px;top:307px;font-family:'Liberation Sans';font-size:18px;line-height:18px;color:#262626;font-weight:normal;font-style:normal;">B</span>
<span style="left:339.00px;top:307px;font-family:'Liberation Sans';font-size:18px;line-height:18px;color:#262626;font-weight:normal;font-style:normal;">C</span>
<span style="left:434.50px;top:307px;font-family:'Liberation Sans';font-size:18px;line-height:18px;color:#262626;font-weight:normal;font-style:normal;">D</span>
<span style="left:531.00px;top:307px;font-family:'Liberation Sans';font-size:18px;line-height:18px;color:#262626;font-weight:normal;font-style:normal;">E</span>
<span style="left:643.50px;top:307px;font-family:'Liberation Sans';font-size:18px;line-height:18px;color:#262626;font-weight:normal;font-style:normal;">F</span>
<span style="left:754.50px;top:307px;font-family:'Liberation Sans';font-size:18px;line-height:18px;color:#217346;font-weight:normal;font-style:normal;">G</span>
<span style="left:851.00px;top:307px;font-family:'Liberation Sans';font-size:18px;line-height:18px;color:#262626;font-weight:normal;font-style:normal;">H</span>
<span style="left:951.00px;top:307px;font-family:'Liberation Sans';font-size:18px;line-height:18px;color:#262626;font-weight:normal;font-style:normal;">I</span>
<span style="left:1045.50px;top:307px;font-family:'Liberation Sans';font-size:18px;line-height:18px;color:#262626;font-weight:normal;font-style:normal;">J</span>
<span style="left:1139.00px;top:307px;font-family:'Liberation Sans';font-size:18px;line-height:18px;color:#262626;font-weight:normal;font-style:normal;">K</span>
<span style="left:1236.00px;top:307px;font-family:'Liberation Sans';font-size:18px;line-height:18px;color:#262626;font-weight:normal;font-style:normal;">L</span>
<span style="left:1330.00px;top:307px;font-family:'Liberation Sans';font-size:18px;line-height:18px;color:#262626;font-weight:normal;font-style:normal;">M</span>
<span style="left:1427.00px;top:307px;font-family:'Liberation Sans';font-size:18px;line-height:18px;color:#262626;font-weight:normal;font-style:normal;">N</span>
<span style="left:1522.00px;top:307px;font-family:'Liberation Sans';font-size:18px;line-height:18px;color:#262626;font-weight:normal;font-style:normal;">O</span>
<span style="left:1619.50px;top:307px;font-family:'Liberation Sans';font-size:18px;line-height:18px;color:#262626;font-weight:normal;font-style:normal;">P</span>
<span style="left:1714.00px;top:307px;font-family:'Liberation Sans';font-size:18px;line-height:18px;color:#262626;font-weight:normal;font-style:normal;">Q</span>
<span style="left:1811.00px;top:307px;font-family:'Liberation Sans';font-size:18px;line-height:18px;color:#262626;font-weight:normal;font-style:normal;">R</span>
<div style="position:absolute;left:0px;top:328px;width:39px;height:625px;overflow:hidden">
<span style="left:13.50px;top:5px;font-family:'Liberation Sans';font-size:20px;line-height:20px;color:#262626;font-weight:normal;font-style:normal;">1</span>
</div>
<div style="position:absolute;left:0px;top:328px;width:39px;height:625px;overflow:hidden">
<span style="left:13.50px;top:34px;font-family:'Liberation Sans';font-size:20px;line-height:20px;color:#262626;font-weight:normal;font-style:normal;">2</span>
</div>
<div style="position:absolute;left:0px;top:328px;width:39px;height:625px;overflow:hidden">
<span style="left:13.50px;top:63px;font-family:'Liberation Sans';font-size:20px;line-height:20px;color:#262626;font-weight:normal;font-style:normal;">3</span>
</div>
<div style="position:absolute;left:0px;top:328px;width:39px;height:625px;overflow:hidden">
<span style="left:14.00px;top:92px;font-family:'Liberation Sans';font-size:20px;line-height:20px;color:#262626;font-weight:normal;font-style:normal;">4</span>
</div>
<div style="position:absolute;left:0px;top:328px;width:39px;height:625px;overflow:hidden">
<span style="left:13.50px;top:121px;font-family:'Liberation Sans';font-size:20px;line-height:20px;color:#217346;font-weight:normal;font-style:normal;">5</span>
</div>
<div style="position:absolute;left:0px;top:328px;width:39px;height:625px;overflow:hidden">
<span style="left:13.50px;top:150px;font-family:'Liberation Sans';font-size:20px;line-height:20px;color:#262626;font-weight:normal;font-style:normal;">6</span>
</div>
<div style="position:absolute;left:0px;top:328px;width:39px;height:625px;overflow:hidden">
<span style="left:13.50px;top:179px;font-family:'Liberation Sans';font-size:20px;line-height:20px;color:#262626;font-weight:normal;font-style:normal;">7</span>
</div>
<div style="position:absolute;left:0px;top:328px;width:39px;height:625px;overflow:hidden">
<span style="left:13.50px;top:208px;font-family:'Liberation Sans';font-size:20px;line-height:20px;color:#262626;font-weight:normal;font-style:normal;">8</span>
</div>
<div style="position:absolute;left:0px;top:328px;width:39px;height:625px;overflow:hidden">
<span style="left:13.50px;top:237px;font-family:'Liberation Sans';font-size:20px;line-height:20px;color:#262626;font-weight:normal;font-style:normal;">9</span>
</div>
<div style="position:absolute;left:0px;top:328px;width:39px;height:625px;overflow:hidden">
<span style="left:8.00px;top:266px;font-family:'Liberation Sans';font-size:20px;line-height:20px;color:#262626;font-weight:normal;font-style:normal;">10</span>
</div>
<div style="position:absolute;left:0px;top:328px;width:39px;height:625px;overflow:hidden">
<span style="left:9.00px;top:295px;font-family:'Liberation Sans';font-size:20px;line-height:20px;color:#262626;font-weight:normal;font-style:normal;">11</span>
</div>
<div style="position:absolute;left:0px;top:328px;width:39px;height:625px;overflow:hidden">
<span style="left:8.00px;top:324px;font-family:'Liberation Sans';font-size:20px;line-height:20px;color:#262626;font-weight:normal;font-style:normal;">12</span>
</div>
<div style="position:absolute;left:0px;top:328px;width:39px;height:625px;overflow:hidden">
<span style="left:8.00px;top:353px;font-family:'Liberation Sans';font-size:20px;line-height:20px;color:#262626;font-weight:normal;font-style:normal;">13</span>
</div>
<div style="position:absolute;left:0px;top:328px;width:39px;height:625px;overflow:hidden">
<span style="left:8.00px;top:382px;font-family:'Liberation Sans';font-size:20px;line-height:20px;color:#262626;font-weight:normal;font-style:normal;">14</span>
</div>
<div style="position:absolute;left:0px;top:328px;width:39px;height:625px;overflow:hidden">
<span style="left:8.00px;top:411px;font-family:'Liberation Sans';font-size:20px;line-height:20px;color:#262626;font-weight:normal;font-style:normal;">15</span>
</div>
<div style="position:absolute;left:0px;top:328px;width:39px;height:625px;overflow:hidden">
<span style="left:8.00px;top:440px;font-family:'Liberation Sans';font-size:20px;line-height:20px;color:#262626;font-weight:normal;font-style:normal;">16</span>
</div>
<div style="position:absolute;left:0px;top:328px;width:39px;height:625px;overflow:hidden">
<span style="left:8.00px;top:469px;font-family:'Liberation Sans';font-size:20px;line-height:20px;color:#262626;font-weight:normal;font-style:normal;">17</span>
</div>
<div style="position:absolute;left:0px;top:328px;width:39px;height:625px;overflow:hidden">
<span style="left:8.00px;top:498px;font-family:'Liberation Sans';font-size:20px;line-height:20px;color:#262626;font-weight:normal;font-style:normal;">18</span>
</div>
<div style="position:absolute;left:0px;top:328px;width:39px;height:625px;overflow:hidden">
<span style="left:8.00px;top:527px;font-family:'Liberation Sans';font-size:20px;line-height:20px;color:#262626;font-weight:normal;font-style:normal;">19</span>
</div>
<div style="position:absolute;left:0px;top:328px;width:39px;height:625px;overflow:hidden">
<span style="left:8.00px;top:556px;font-family:'Liberation Sans';font-size:20px;line-height:20px;color:#262626;font-weight:normal;font-style:normal;">20</span>
</div>
<div style="position:absolute;left:0px;top:328px;width:39px;height:625px;overflow:hidden">
<span style="left:8.00px;top:585px;font-family:'Liberation Sans';font-size:20px;line-height:20px;color:#262626;font-weight:normal;font-style:normal;">21</span>
</div>
<div style="position:absolute;left:0px;top:328px;width:39px;height:625px;overflow:hidden">
<span style="left:8.00px;top:614px;font-family:'Liberation Sans';font-size:20px;line-height:20px;color:#262626;font-weight:normal;font-style:normal;">22</span>
</div>
<span style="left:42.85px;top:333px;font-family:'Liberation Sans';font-size:20px;line-height:20px;color:#000000;font-weight:bold;font-style:normal;transform:scaleX(0.9037);">FIRST NAME</span>
<span style="left:173.85px;top:333px;font-family:'Liberation Sans';font-size:20px;line-height:20px;color:#000000;font-weight:bold;font-style:normal;transform:scaleX(0.8987);">LAST NAME</span>
<span style="left:300.97px;top:333px;font-family:'Liberation Sans';font-size:20px;line-height:20px;color:#000000;font-weight:bold;font-style:normal;transform:scaleX(0.9322);">MARK</span>
<span style="left:43.40px;top:362px;font-family:'Liberation Sans';font-size:20px;line-height:20px;color:#000000;font-weight:normal;font-style:normal;transform:scaleX(0.8990);">PRIYANKA</span>
<span style="left:174.03px;top:362px;font-family:'Liberation Sans';font-size:20px;line-height:20px;color:#000000;font-weight:normal;font-style:normal;transform:scaleX(0.9671);">MURALI</span>
<span style="left:367.77px;top:362px;font-family:'Liberation Sans';font-size:20px;line-height:20px;color:#000000;font-weight:normal;font-style:normal;transform:scaleX(0.9786);">90</span>
<span style="left:42.87px;top:391px;font-family:'Liberation Sans';font-size:20px;line-height:20px;color:#000000;font-weight:normal;font-style:normal;transform:scaleX(0.8804);">PREETHI</span>
<span style="left:173.08px;top:391px;font-family:'Liberation Sans';font-size:20px;line-height:20px;color:#000000;font-weight:normal;font-style:normal;transform:scaleX(0.9167);">SADHISH</span>
<span style="left:367.77px;top:391px;font-family:'Liberation Sans';font-size:20px;line-height:20px;color:#000000;font-weight:normal;font-style:normal;transform:scaleX(0.9786);">70</span>
<span style="left:42.45px;top:420px;font-family:'Liberation Sans';font-size:20px;line-height:20px;color:#000000;font-weight:normal;font-style:normal;transform:scaleX(0.8543);">SURESH</span>
<span style="left:173.75px;top:420px;font-family:'Liberation Sans';font-size:20px;line-height:20px;color:#000000;font-weight:normal;font-style:normal;transform:scaleX(0.8500);">RAJ</span>
<span style="left:367.77px;top:420px;font-family:'Liberation Sans';font-size:20px;line-height:20px;color:#000000;font-weight:normal;font-style:normal;transform:scaleX(0.9786);">85</span>
<span style="left:43.75px;top:449px;font-family:'Liberation Sans';font-size:20px;line-height:20px;color:#000000;font-weight:normal;font-style:normal;transform:scaleX(0.9336);">VINAY</span>
<span style="left:173.72px;top:449px;font-family:'Liberation Sans';font-size:20px;line-height:20px;color:#000000;font-weight:normal;font-style:normal;transform:scaleX(0.8790);">PRASAD</span>
<span style="left:367.77px;top:449px;font-family:'Liberation Sans';font-size:20px;line-height:20px;color:#000000;font-weight:normal;font-style:normal;transform:scaleX(0.9786);">69</span>
<span style="left:42.45px;top:478px;font-family:'Liberation Sans';font-size:20px;line-height:20px;color:#000000;font-weight:normal;font-style:normal;transform:scaleX(0.8543);">SURESH</span>
<span style="left:173.58px;top:478px;font-family:'Liberation Sans';font-size:20px;line-height:20px;color:#000000;font-weight:normal;font-style:normal;transform:scaleX(1.0198);">MANO</span>
<span style="left:367.77px;top:478px;font-family:'Liberation Sans';font-size:20px;line-height:20px;color:#000000;font-weight:normal;font-style:normal;transform:scaleX(0.9786);">60</span>
<span style="left:589.29px;top:391px;font-family:'Liberation Sans';font-size:20px;line-height:20px;color:#000000;font-weight:normal;font-style:normal;transform:scaleX(0.9122);">FIRST NAME</span>
<span style="left:589.29px;top:420px;font-family:'Liberation Sans';font-size:20px;line-height:20px;color:#000000;font-weight:normal;font-style:normal;transform:scaleX(0.9143);">LAST NAME</span>
<span style="left:589.26px;top:449px;font-family:'Liberation Sans';font-size:20px;line-height:20px;color:#000000;font-weight:normal;font-style:normal;transform:scaleX(0.9404);">MARK</span>
<span style="left:716.95px;top:391px;font-family:'Liberation Sans';font-size:20px;line-height:20px;color:#000000;font-weight:normal;font-style:normal;transform:scaleX(0.8469);">SURESH</span>
<span style="left:717.17px;top:420px;font-family:'Liberation Sans';font-size:20px;line-height:20px;color:#000000;font-weight:normal;font-style:normal;transform:scaleX(0.8333);">RAJ</span>
<span style="left:783.72px;top:449px;font-family:'Liberation Sans';font-size:20px;line-height:20px;color:#000000;font-weight:normal;font-style:normal;transform:scaleX(0.9810);">85</span>
<span style="left:224.92px;top:651px;font-family:'Liberation Sans';font-size:42px;line-height:42px;color:#000000;font-weight:normal;font-style:italic;transform:scaleX(1.0784);-webkit-text-stroke:0.6px #000">developerpublish·com</span>
<span style="left:129.48px;top:958.7px;font-family:'Liberation Sans';font-size:19px;line-height:19px;color:#217346;font-weight:bold;font-style:normal;transform:scaleX(1.0246);">Sheet1</span>
<span style="left:11.33px;top:996.5px;font-family:'Liberation Sans';font-size:17px;line-height:17px;color:#444444;font-weight:normal;font-style:normal;transform:scaleX(0.8708);">Ready</span>
<span style="left:79.63px;top:996.5px;font-family:'Liberation Sans';font-size:17px;line-height:17px;color:#444444;font-weight:normal;font-style:normal;transform:scaleX(0.8696);">Caps Lock</span>
<span style="left:1869.08px;top:996.5px;font-family:'Liberation Sans';font-size:17px;line-height:17px;color:#444444;font-weight:normal;font-style:normal;transform:scaleX(0.9167);">100%</span>
<span style="left:158.79px;top:163.8px;font-family:'Liberation Sans';font-size:22px;line-height:22px;color:#444444;font-weight:bold;font-style:normal;transform:scaleX(0.9143);">B</span>
<span style="left:190.80px;top:163.8px;font-family:'Liberation Serif';font-size:22px;line-height:22px;color:#444444;font-weight:bold;font-style:italic;transform:scaleX(1.3556);">I</span>
<span style="left:221.51px;top:163.8px;font-family:'Liberation Sans';font-size:22px;line-height:22px;color:#444444;font-weight:bold;font-style:normal;transform:scaleX(0.9857);">U</span>
<span style="left:378.00px;top:117.9px;font-family:'Liberation Sans';font-size:24px;line-height:24px;color:#5a5a5a;font-weight:normal;font-style:normal;transform:scaleX(0.9875);-webkit-text-stroke:0.7px #5a5a5a">A</span>
<span style="left:410.80px;top:121.9px;font-family:'Liberation Sans';font-size:19px;line-height:19px;color:#5a5a5a;font-weight:normal;font-style:normal;transform:scaleX(0.9923);-webkit-text-stroke:0.6px #5a5a5a">A</span>
<span style="left:393.60px;top:161.9px;font-family:'Liberation Sans';font-size:23px;line-height:23px;color:#5a5a5a;font-weight:bold;font-style:normal;transform:scaleX(0.8812);">A</span>
</div>
<svg width="1920" height="1010" viewBox="0 0 1920 1010">
<rect x="713" y="443" width="97" height="30" fill="none" stroke="#217346" stroke-width="2"/>
<rect x="805" y="468" width="8" height="8" fill="#ffffff"/>
<rect x="806" y="469" width="6" height="6" fill="#217346"/>
<rect x="313.5" y="241.5" width="526" height="53.5" fill="none" stroke="#ed1c24" stroke-width="5"/>
</svg>
</body></html>
